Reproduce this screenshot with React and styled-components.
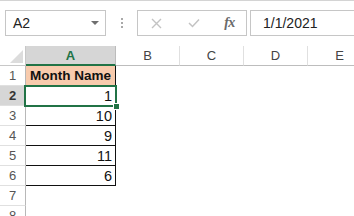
import React from 'react';
import styled, { createGlobalStyle } from 'styled-components';

const Global = createGlobalStyle`
  html, body { margin: 0; padding: 0; background: #fff; overflow: hidden; }
  body { font-family: "Liberation Sans", Arial, sans-serif; }
`;

const Page = styled.div`
  width: 354px;
  height: 216px;
  overflow: hidden;
  border-top: 1px solid #d4d4d4;
  box-sizing: border-box;
`;

const FormulaBar = styled.div`
  display: flex;
  align-items: center;
  height: 26px;
  margin-top: 9px;
  margin-bottom: 10px;
  padding-left: 5px;
`;

const NameBox = styled.div`
  width: 101px;
  height: 26px;
  box-sizing: border-box;
  border: 1px solid #c6c6c6;
  display: flex;
  align-items: center;
  justify-content: space-between;
  padding: 0 6px 0 7px;
  font-size: 14px;
  color: #222;
`;

const Caret = styled.span`
  width: 0;
  height: 0;
  border-left: 4px solid transparent;
  border-right: 4px solid transparent;
  border-top: 4px solid #6f6f6f;
`;

const Dots = styled.div`
  width: 31px;
  display: flex;
  flex-direction: column;
  align-items: center;
  gap: 2px;
  span {
    width: 2px;
    height: 2px;
    background: #a9a9a9;
  }
`;

const ButtonBox = styled.div`
  width: 110px;
  height: 26px;
  box-sizing: border-box;
  border: 1px solid #c6c6c6;
  display: flex;
  align-items: center;
`;

const BarButton = styled.div`
  width: ${p => p.w}px;
  display: flex;
  justify-content: center;
  align-items: center;
`;

const Fx = styled.span`
  font-family: "Liberation Serif", "Times New Roman", serif;
  font-style: italic;
  font-size: 14px;
  color: #6a6a6a;
  font-weight: bold;
  letter-spacing: -0.5px;
`;

const InputBox = styled.div`
  flex: 1;
  margin-left: 3px;
  height: 26px;
  box-sizing: border-box;
  border: 1px solid #c6c6c6;
  border-right: none;
  display: flex;
  align-items: center;
  padding-left: 12px;
  font-size: 14px;
  color: #222;
`;

const Grid = styled.div`
  display: grid;
  grid-template-columns: 26px 90px repeat(4, 64px);
  grid-template-rows: 20px;
  grid-auto-rows: 20px;
`;

const Corner = styled.div`
  position: relative;
  border-right: 1px solid #c8c8c8;
  border-bottom: 1px solid #c8c8c8;
  box-sizing: border-box;
  &::after {
    content: '';
    position: absolute;
    right: 2px;
    bottom: 2px;
    border-left: 13px solid transparent;
    border-bottom: 13px solid #dcdcdc;
  }
`;

const ColHead = styled.div`
  box-sizing: border-box;
  display: flex;
  align-items: center;
  justify-content: center;
  font-size: 13px;
  background: ${p => (p.$active ? '#d6d6d6' : '#fff')};
  color: ${p => (p.$active ? '#217346' : '#444')};
  font-weight: ${p => (p.$active ? 'bold' : 'normal')};
  border-right: 1px solid ${p => (p.$active ? '#bcbcbc' : '#e0e0e0')};
  border-bottom: ${p => (p.$active ? '2px solid #217346' : '1px solid #bdbdbd')};
  padding-top: ${p => (p.$active ? '1px' : '0')};
`;

const RowHead = styled.div`
  box-sizing: border-box;
  display: flex;
  align-items: center;
  justify-content: center;
  font-size: 13px;
  background: ${p => (p.$active ? '#d6d6d6' : '#fff')};
  color: ${p => (p.$active ? '#333' : '#555')};
  font-weight: ${p => (p.$active ? 'bold' : 'normal')};
  border-right: 1px solid #b8b8b8;
  border-bottom: 1px solid #e0e0e0;
`;

const Cell = styled.div`
  position: relative;
  box-sizing: border-box;
  display: flex;
  align-items: center;
  justify-content: ${p => (p.$head ? 'center' : 'flex-end')};
  padding: 0 3px;
  white-space: nowrap;
  font-weight: ${p => (p.$head ? 'bold' : 'normal')};
  font-size: ${p => (p.$head ? '13.5px' : '14.5px')};
  color: #111;
  background: ${p => (p.$head ? '#f8cbad' : '#fff')};
  border-right: 1px solid ${p => (p.$boxed || p.$head ? '#111' : 'transparent')};
  border-bottom: 1px solid ${p => (p.$boxed ? '#111' : 'transparent')};
`;

const Selection = styled.div`
  position: absolute;
  z-index: 2;
  left: -2px;
  top: -1px;
  right: -2px;
  bottom: -2px;
  border: 2px solid #217346;
  pointer-events: none;
  &::after {
    content: '';
    position: absolute;
    right: -5px;
    bottom: -5px;
    width: 5px;
    height: 5px;
    background: #217346;
    border: 1px solid #fff;
  }
`;

const columns = ['A', 'B', 'C', 'D', 'E'];
const values = ['Month Name', '1', '10', '9', '11', '6', '', ''];

export default function App() {
  return (
    <>
      <Global />
      <Page>
        <FormulaBar>
          <NameBox>
            A2
            <Caret />
          </NameBox>
          <Dots>
            <span />
            <span />
            <span />
          </Dots>
          <ButtonBox>
            <BarButton w={37}>
              <svg width="11" height="11" viewBox="0 0 11 11">
                <path d="M1 1L10 10M10 1L1 10" stroke="#c3c3c3" strokeWidth="1.4" />
              </svg>
            </BarButton>
            <BarButton w={38}>
              <svg width="12" height="10" viewBox="0 0 12 10">
                <path d="M1 5L4.5 8.5L11 1.5" stroke="#c3c3c3" strokeWidth="1.5" fill="none" />
              </svg>
            </BarButton>
            <BarButton w={33}>
              <Fx>fx</Fx>
            </BarButton>
          </ButtonBox>
          <InputBox>1/1/2021</InputBox>
        </FormulaBar>
        <Grid>
          <Corner />
          {columns.map(c => (
            <ColHead key={c} $active={c === 'A'}>{c}</ColHead>
          ))}
          {values.map((v, i) => (
            <React.Fragment key={i}>
              <RowHead $active={i === 1}>{i + 1}</RowHead>
              <Cell $head={i === 0} $boxed={i > 0 && i < 6}>
                {v}
                {i === 1 && <Selection />}
              </Cell>
              {columns.slice(1).map(c => (
                <Cell key={c} />
              ))}
            </React.Fragment>
          ))}
        </Grid>
      </Page>
    </>
  );
}
